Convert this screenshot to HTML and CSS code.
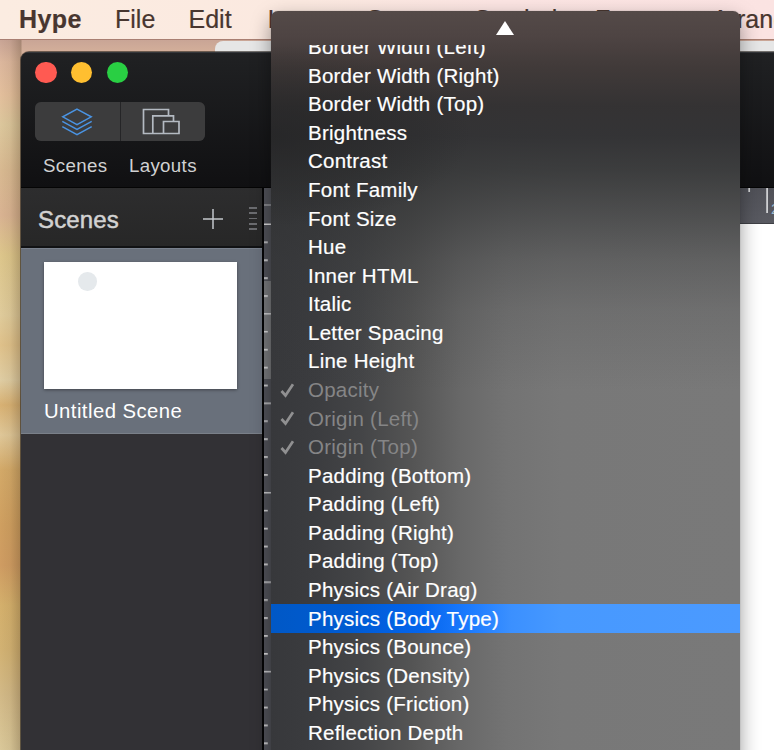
FILE: index.html
```html
<!DOCTYPE html>
<html lang="en">
<head>
<meta charset="utf-8">
<title>Hype</title>
<link rel="stylesheet" href="styles.css">
</head>
<body>
<div class="desktop">
  <nav class="menubar">
    <b class="app">Hype</b><span class="m-file">File</span><span class="m-edit">Edit</span><span class="m-insert">Insert</span><span class="m-scene">Scene</span><span class="m-symbol">Symbols</span><span class="m-format">Format</span><span>Arrange</span>
  </nav>
  <div class="back-window"></div>
  <main class="window">
    <header class="toolbar">
      <div class="lights"><i class="red"></i><i class="yellow"></i><i class="green"></i></div>
      <div class="segments">
        <button class="segment scenes">
          <svg width="32" height="28" viewBox="0 0 32 28" fill="none" stroke="#4a93e2" stroke-width="1.5"><path d="M16 1.2 30.200 8.800 16 16.600 1.800 8.800Z"/><path d="M1.300 13.400 16 21.400 30.700 13.400M1.300 18.600 16 26.600 30.700 18.600"/></svg>
        </button>
        <button class="segment layouts">
          <svg width="38" height="27" viewBox="0 0 38 27" fill="none" stroke="#b4bac2" stroke-width="1.7"><path d="M26.500 7.500V1.500H1.500V25.500H37V13.500H21.500V25.500M31.500 13.500V7.800H10.800V25.500"/></svg>
        </button>
      </div>
      <div class="labels"><span>Scenes</span><span>Layouts</span></div>
    </header>
    <div class="content">
      <aside class="sidebar">
        <div class="side-head">
          <h1>Scenes</h1>
          <svg class="plus" width="20" height="20" viewBox="0 0 20 20" stroke="#c3c7cc" stroke-width="1.5"><path d="M0 10H20M10 0V20"/></svg>
          <span class="grip"><i></i><i></i><i></i><i></i><i></i></span>
        </div>
        <div class="scene">
          <div class="thumb"><i></i></div>
          <p>Untitled Scene</p>
        </div>
      </aside>
      <section class="stage">
        <div class="ruler-top">
          <svg width="20" height="28" viewBox="0 0 20 28" stroke="#d5d6d8" stroke-width="1.700"><path d="M1.200 0V4M19.100 0V25"/></svg><span>2</span>
        </div>
        <div class="ruler-row">
          <div class="ruler-left">
            <svg width="8" height="563" viewBox="0 0 8 563">
              <defs><pattern id="t" y="11.100" width="8" height="89.450" patternUnits="userSpaceOnUse"><path d="M0 .8H8" stroke="#d8d8da" stroke-width="1.400"/><path d="M0 18.700H3.800M0 36.600H3.800M0 54.500H3.800M0 72.400H3.800" stroke="#d8d8da" stroke-width="1.600"/></pattern></defs>
              <path d="M0 93H8V191H0Z" fill="#77787b"/>
              <path d="M0 17H8" stroke="#96979b" stroke-width="1.500"/>
              <rect y="22" width="8" height="541" fill="url(#t)" transform="translate(0 24.500)"/>
              <path d="M0 36.300H8" stroke="#d8d8da" stroke-width="1.500"/>
            </svg>
          </div>
        </div>
      </section>
    </div>
  </main>
  <div class="popup">
    <div class="arrow"><svg width="18" height="14" viewBox="0 0 18 14"><path d="M9 0 18 14H0Z" fill="#fff"/></svg></div>
    <ul class="items">
      <li>Border Width (Left)</li>
      <li>Border Width (Right)</li>
      <li>Border Width (Top)</li>
      <li>Brightness</li>
      <li>Contrast</li>
      <li>Font Family</li>
      <li>Font Size</li>
      <li>Hue</li>
      <li>Inner HTML</li>
      <li>Italic</li>
      <li>Letter Spacing</li>
      <li>Line Height</li>
      <li class="off"><svg viewBox="0 0 15 15"><path d="M1.500 8 5.500 12.500 13 1.200"/></svg>Opacity</li>
      <li class="off"><svg viewBox="0 0 15 15"><path d="M1.500 8 5.500 12.500 13 1.200"/></svg>Origin (Left)</li>
      <li class="off"><svg viewBox="0 0 15 15"><path d="M1.500 8 5.500 12.500 13 1.200"/></svg>Origin (Top)</li>
      <li>Padding (Bottom)</li>
      <li>Padding (Left)</li>
      <li>Padding (Right)</li>
      <li>Padding (Top)</li>
      <li>Physics (Air Drag)</li>
      <li class="active">Physics (Body Type)</li>
      <li>Physics (Bounce)</li>
      <li>Physics (Density)</li>
      <li>Physics (Friction)</li>
      <li>Reflection Depth</li>
    </ul>
  </div>
</div>
</body>
</html>
```
FILE: styles.css
```css
* { box-sizing: border-box; margin: 0; padding: 0; }
body { width: 774px; height: 750px; overflow: hidden; font-family: "Liberation Sans", Arial, sans-serif; }
.desktop {
  position: relative; width: 774px; height: 750px; overflow: hidden;
  background: linear-gradient(90deg, transparent 0, rgba(70,50,25,.06) 10px, rgba(70,50,25,.28) 21px, transparent 22px),
    linear-gradient(#c9a596 40px, #dcb79d 62px, #e3bf9c 95px, #dcc79c 125px, #d8b991 170px, #d9b392 215px, #ddc68b 255px, #dfcb9b 315px, #dfc18a 345px, #dfcda3 380px, #d8b173 405px, #dfc798 435px, #d3a968 470px, #cf9f60 525px, #cf9c62 565px, #d4b06c 605px, #d2b273 650px, #d2b987 695px, #dac899 750px);
}
.menubar {
  display: flex; height: 40px; padding-left: 19px; line-height: 39px; font-size: 25px; color: #48362f; white-space: nowrap;
  background: linear-gradient(90deg, #fbece1, #fbe9e0 300px, #fce5e3 500px, #fbe3e2 774px);
  border-bottom: 1px solid #a97f72; -webkit-text-stroke: .2px;
}
.menubar > * { flex: none; }
.app { width: 96px; letter-spacing: .4px; }
.m-file { width: 73.500px; }
.m-edit { width: 79px; }
.m-insert { width: 99px; }
.m-scene { width: 107.500px; }
.m-symbol { width: 121px; }
.m-format { width: 117px; }
.back-window { position: absolute; left: 215px; top: 41px; width: 600px; height: 30px; border-radius: 8px 0 0; background: #e6e6e6; }
.window {
  position: absolute; left: 21px; top: 52px; width: 800px; height: 720px;
  border-radius: 8px 0 0; background: #323135; overflow: hidden;
  box-shadow: 0 0 0 1px rgba(40,35,30,.6);
}
.toolbar { height: 136px; padding: 8.500px 0 0 14px; background: linear-gradient(#202123, #101012); border-top: 1px solid #34363a; border-bottom: 1px solid #050505; }
.lights { display: flex; gap: 14.300px; height: 22px; }
.lights i { width: 21.500px; height: 21.500px; border-radius: 50%; }
.red { background: #ff5a52; }
.yellow { background: #ffbf30; }
.green { background: #29cf43; }
.segments { display: flex; gap: 1px; width: 170px; height: 39px; margin-top: 18.500px; border-radius: 6px; overflow: hidden; background: #252527; }
.segment { display: flex; flex: none; width: 85px; align-items: center; justify-content: center; border: 0; background: #3c3c3d; }
.scenes { padding-right: 1px; }
.layouts { width: 84px; padding-right: 4px; }
.labels { display: flex; gap: 21.500px; margin-top: 12.500px; padding-left: 8px; line-height: 24px; font-size: 18.700px; letter-spacing: .35px; color: #d0d1d2; }
.content { display: flex; height: 584px; }
.sidebar { flex: none; width: 243px; border-right: 2px solid #050506; }
.side-head { display: flex; align-items: center; height: 60px; padding: 3px 5px 0 17px; background: linear-gradient(#2d2d2e, #272727); border-bottom: 2px solid #111214; }
.side-head h1 { flex: none; width: 165px; padding-top: 2px; font-size: 24px; font-weight: 400; letter-spacing: .15px; color: #d2d2d2; -webkit-text-stroke: .5px; }
.plus { flex: none; margin-right: 26px; }
.grip { display: flex; flex: none; flex-direction: column; gap: 3.800px; }
.grip i { width: 8px; height: 1.500px; background: #6b6c70; }
.scene { height: 186px; padding: 13px 0 0 23px; background: #69707b; border-top: 1px solid #79818d; border-bottom: 1px solid #7a8089; }
.thumb { width: 193px; height: 127px; padding: 10px 0 0 34px; background: #fff; box-shadow: 0 1px 3px rgba(0,0,0,.4); }
.thumb i { display: block; width: 18.500px; height: 18.500px; border-radius: 50%; background: #e5e9ec; }
.scene p { margin-top: 9px; line-height: 26px; font-size: 20.300px; letter-spacing: .45px; color: #fff; }
.stage { flex: 1; background: #fff; }
.ruler-top { display: flex; height: 35.500px; padding-left: 484px; background: linear-gradient(#505158, #595a61); border-bottom: 1px solid #3f4045; color: #9bb9d0; font-size: 15px; }
.ruler-top span { padding: 12px 0 0 3px; }
.ruler-row { height: 548px; }
.ruler-left { width: 30px; height: 584px; margin-top: -35.500px; background: #505158; }
.popup {
  position: absolute; left: 271px; top: 10.500px; width: 468.500px; height: 760px;
  border-radius: 7px 7px 0 0; overflow: hidden;
  box-shadow: 0 0 1px rgba(60,60,60,.6), 0 8px 20px rgba(0,0,0,.4);
  background:
    radial-gradient(ellipse 200px 90px at 0 125px, rgba(36,36,37,.75), rgba(36,36,37,0)),
    linear-gradient(#544a48 0, #4e4443 25px, rgba(64,57,56,.98) 55px, rgba(50,48,49,.97) 95px, rgba(48,48,50,.95) 125px, rgba(50,51,52,.85) 160px, rgba(50,51,52,.6) 205px, rgba(52,53,54,.35) 250px, rgba(52,53,54,.15) 300px, rgba(52,53,54,0) 380px),
    linear-gradient(90deg, #37383b 0, #3b3c3f 45px, #444547 90px, #545454 140px, #686868 190px, #737373 235px, #787878 290px, #797979 100%);
}
.arrow { display: flex; justify-content: center; height: 34px; padding-top: 10px; }
.items { height: 730px; overflow: hidden; list-style: none; font-size: 20.500px; letter-spacing: .24px; color: #fff; -webkit-text-stroke: .2px; }
.items li { display: flex; align-items: center; height: 28.590px; padding: .6px 0 0 37px; white-space: nowrap; }
.items li:first-child { margin-top: -12px; }
.items .off { padding-left: 9px; color: #858586; -webkit-text-stroke: 0; }
.off svg { width: 15px; height: 15px; margin-right: 13px; fill: none; stroke: #909091; stroke-width: 2.700; }
.items .active { background: linear-gradient(90deg, #0058c6 0, #005bd2 80px, #0465ed 150px, #1d7cff 200px, #3b90ff 240px, #4799ff 290px, #4b9aff 100%); }
```
